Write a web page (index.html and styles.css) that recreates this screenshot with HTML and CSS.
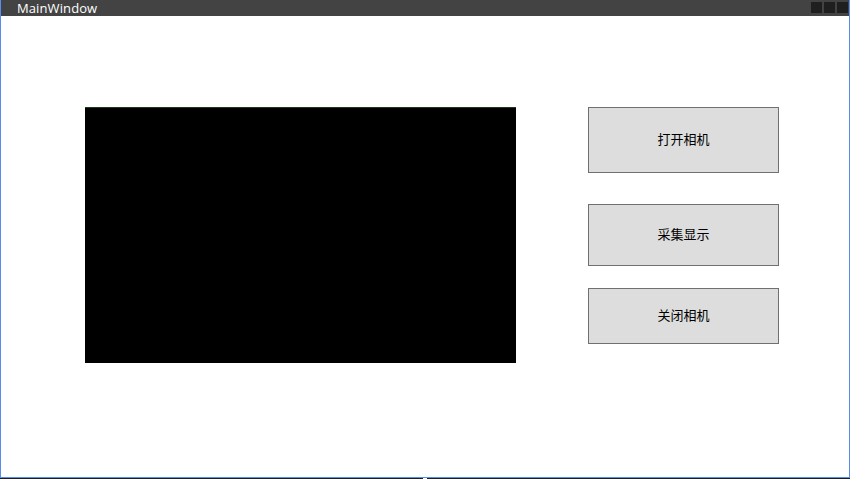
FILE: index.html
```html
<!DOCTYPE html>
<html>
<head>
<meta charset="utf-8">
<link rel="stylesheet" href="styles.css">
</head>
<body>
<div class="window">
  <div class="titlebar">
    <span class="title">MainWindow</span>
    <div class="controls">
      <span class="ctl"></span>
      <span class="ctl"></span>
      <span class="ctl"></span>
    </div>
  </div>
  <div class="content">
    <div class="video"></div>
    <div class="buttons">
      <div class="btn btn-open">打开相机</div>
      <div class="btn btn-grab">采集显示</div>
      <div class="btn btn-close">关闭相机</div>
    </div>
  </div>
</div>
<div class="strip"><span class="dark left"></span><span class="notch"></span><span class="dark right"></span></div>
</body>
</html>
```

FILE: styles.css
```css
html, body {
  margin: 0;
  padding: 0;
  width: 850px;
  height: 479px;
  overflow: hidden;
  background: #ffffff;
}
.window {
  box-sizing: border-box;
  width: 850px;
  height: 478px;
  border-left: 1px solid #5a8cf0;
  border-right: 1px solid #5a8cf0;
  border-bottom: 1px solid #5a8cf0;
  display: flex;
  flex-direction: column;
}
.titlebar {
  height: 16px;
  background: #434343;
  display: flex;
  align-items: center;
  justify-content: space-between;
  flex: none;
}
.title {
  color: #ffffff;
  font-family: "Open Sans", "Liberation Sans", sans-serif;
  font-size: 13px;
  line-height: 16px;
  padding-left: 16px;
  letter-spacing: 0.1px;
}
.controls {
  display: flex;
  gap: 2px;
  padding-right: 1px;
  align-self: flex-start;
  padding-top: 2px;
}
.ctl {
  width: 11px;
  height: 11px;
  background: #1f1f1f;
}
.content {
  flex: 1;
  display: flex;
  align-items: flex-start;
  padding-top: 91px;
  padding-left: 84px;
}
.video {
  width: 431px;
  height: 256px;
  background: #000000;
  border-top: 1px solid #1d3a1d;
  box-sizing: border-box;
}
.buttons {
  margin-left: 72px;
  display: flex;
  flex-direction: column;
}
.btn {
  box-sizing: border-box;
  width: 191px;
  border: 1px solid #707070;
  background: #dddddd;
  display: flex;
  align-items: center;
  justify-content: center;
  padding-bottom: 3px;
  font-family: "Noto Sans CJK SC", "Liberation Sans", sans-serif;
  font-size: 13px;
  color: #000000;
}
.btn-open { height: 66px; }
.btn-grab { height: 62px; margin-top: 31px; }
.btn-close { height: 56px; margin-top: 22px; }
.strip {
  display: flex;
  height: 1px;
}
.dark { background: #1e1e1e; height: 1px; }
.left { width: 423px; }
.notch { width: 4px; height: 1px; background: #ffffff; }
.right { flex: 1; }
```
